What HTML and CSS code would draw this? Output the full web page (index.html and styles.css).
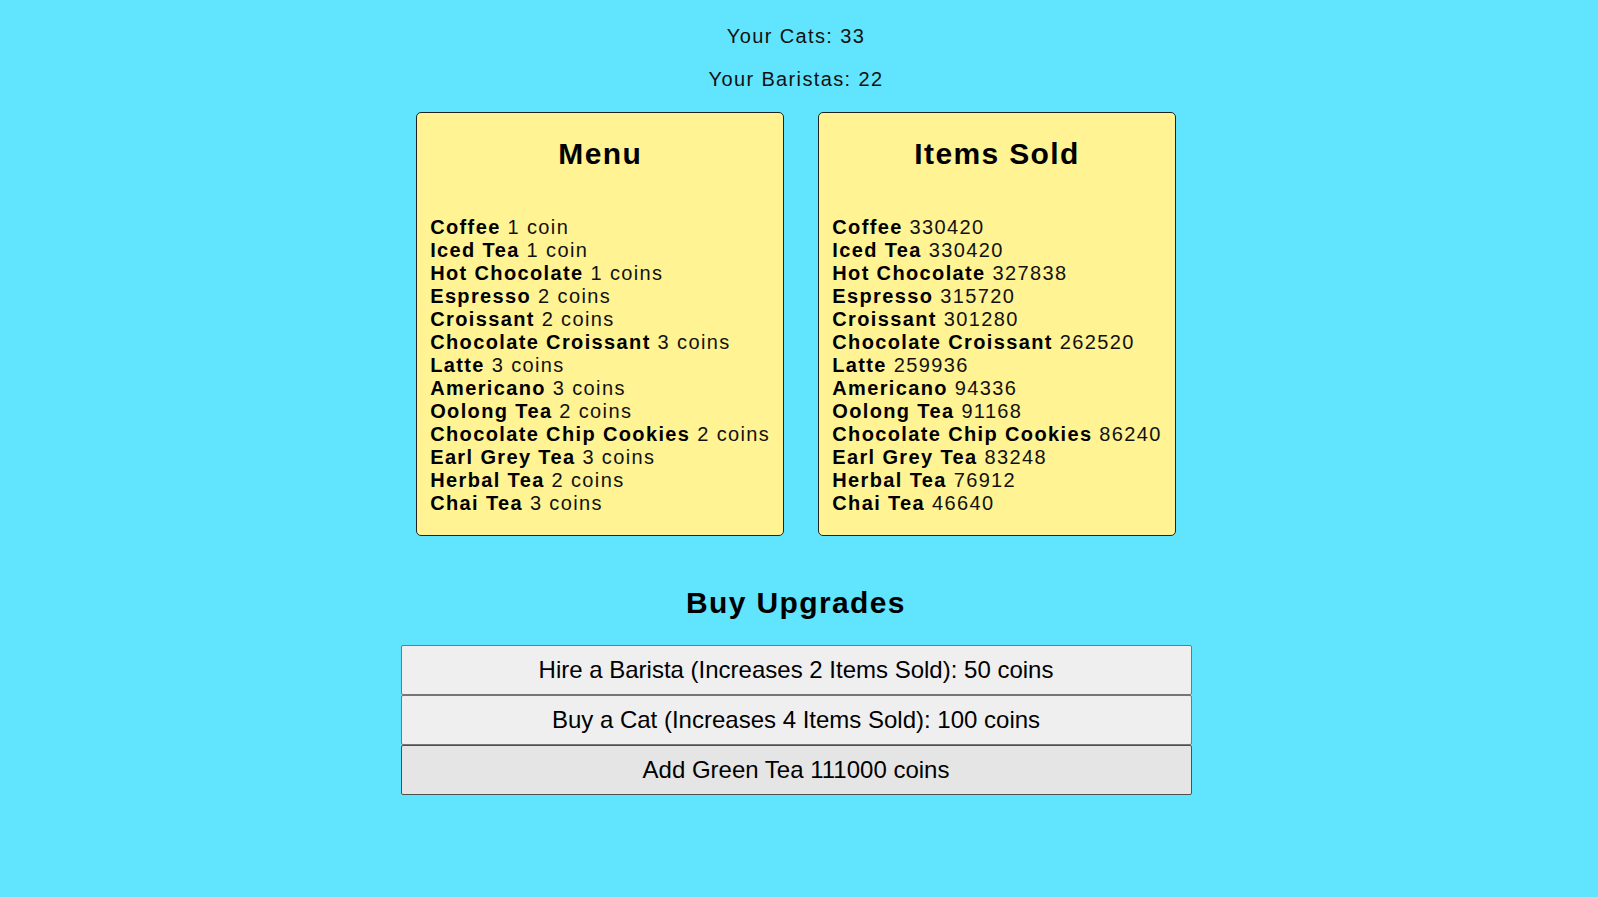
FILE: index.html
```html
<!DOCTYPE html>
<html lang="en">
<head>
<meta charset="utf-8">
<title>Cat Cafe</title>
<link rel="stylesheet" href="styles.css">
</head>
<body>
<main class="page">
  <section class="stats">
    <p class="stat">Your Cats: 33</p>
    <p class="stat">Your Baristas: 22</p>
  </section>

  <section class="cards">
    <div class="card">
      <h2 class="card-title">Menu</h2>
      <div class="list">
        <div class="row"><b>Coffee</b> 1 coin</div>
        <div class="row"><b>Iced Tea</b> 1 coin</div>
        <div class="row"><b>Hot Chocolate</b> 1 coins</div>
        <div class="row"><b>Espresso</b> 2 coins</div>
        <div class="row"><b>Croissant</b> 2 coins</div>
        <div class="row"><b>Chocolate Croissant</b> 3 coins</div>
        <div class="row"><b>Latte</b> 3 coins</div>
        <div class="row"><b>Americano</b> 3 coins</div>
        <div class="row"><b>Oolong Tea</b> 2 coins</div>
        <div class="row"><b>Chocolate Chip Cookies</b> 2 coins</div>
        <div class="row"><b>Earl Grey Tea</b> 3 coins</div>
        <div class="row"><b>Herbal Tea</b> 2 coins</div>
        <div class="row"><b>Chai Tea</b> 3 coins</div>
      </div>
    </div>
    <div class="card">
      <h2 class="card-title">Items Sold</h2>
      <div class="list">
        <div class="row"><b>Coffee</b> 330420</div>
        <div class="row"><b>Iced Tea</b> 330420</div>
        <div class="row"><b>Hot Chocolate</b> 327838</div>
        <div class="row"><b>Espresso</b> 315720</div>
        <div class="row"><b>Croissant</b> 301280</div>
        <div class="row"><b>Chocolate Croissant</b> 262520</div>
        <div class="row"><b>Latte</b> 259936</div>
        <div class="row"><b>Americano</b> 94336</div>
        <div class="row"><b>Oolong Tea</b> 91168</div>
        <div class="row"><b>Chocolate Chip Cookies</b> 86240</div>
        <div class="row"><b>Earl Grey Tea</b> 83248</div>
        <div class="row"><b>Herbal Tea</b> 76912</div>
        <div class="row"><b>Chai Tea</b> 46640</div>
      </div>
    </div>
  </section>

  <section class="upgrades">
    <h2 class="upgrades-title">Buy Upgrades</h2>
    <div class="buttons">
      <button class="btn">Hire a Barista (Increases 2 Items Sold): 50 coins</button>
      <button class="btn">Buy a Cat (Increases 4 Items Sold): 100 coins</button>
      <button class="btn btn-hover">Add Green Tea 111000 coins</button>
    </div>
  </section>
</main>
</body>
</html>
```

FILE: styles.css
```css
html, body {
  margin: 0;
  padding: 0;
  background: #61e4fe;
}

body {
  font-family: "Liberation Sans", Arial, sans-serif;
  font-size: 20px;
  line-height: 23px;
  letter-spacing: 1.37px;
  color: #111;
}

.page {
  padding: 25px 14px 0 8px;
  display: flex;
  flex-direction: column;
  align-items: center;
}

.stats {
  display: flex;
  flex-direction: column;
  align-items: center;
  gap: 20px;
}

.stat {
  margin: 0;
}

.cards {
  display: flex;
  gap: 34px;
  margin-top: 21px;
  align-items: flex-start;
}

.card {
  background: #fff394;
  border: 1px solid #222;
  border-radius: 5px;
  padding: 0 13px;
  display: flex;
  flex-direction: column;
}

.card-title,
.upgrades-title {
  font-size: 30px;
  line-height: 34px;
  font-weight: 700;
  text-align: center;
  margin: 24px 0 0;
  color: #000;
}

.list {
  margin: 45px 0 20px;
}

.row {
  white-space: nowrap;
}

.row b {
  font-weight: 700;
  color: #000;
}

.upgrades {
  display: flex;
  flex-direction: column;
  align-items: center;
  margin-top: 27px;
}

.upgrades .upgrades-title {
  margin-top: 23px;
}

.buttons {
  margin-top: 25px;
  display: flex;
  flex-direction: column;
  width: 791px;
}

.btn {
  font-family: "Liberation Sans", Arial, sans-serif;
  font-size: 24px;
  line-height: 28px;
  letter-spacing: normal;
  color: #000;
  background: #efefef;
  border: 1px solid #767676;
  border-radius: 2px;
  padding: 10px 6px;
  margin: 0;
  text-align: center;
}

.btn-hover {
  background: #e5e5e5;
  border-color: #4f4f4f;
}
```
